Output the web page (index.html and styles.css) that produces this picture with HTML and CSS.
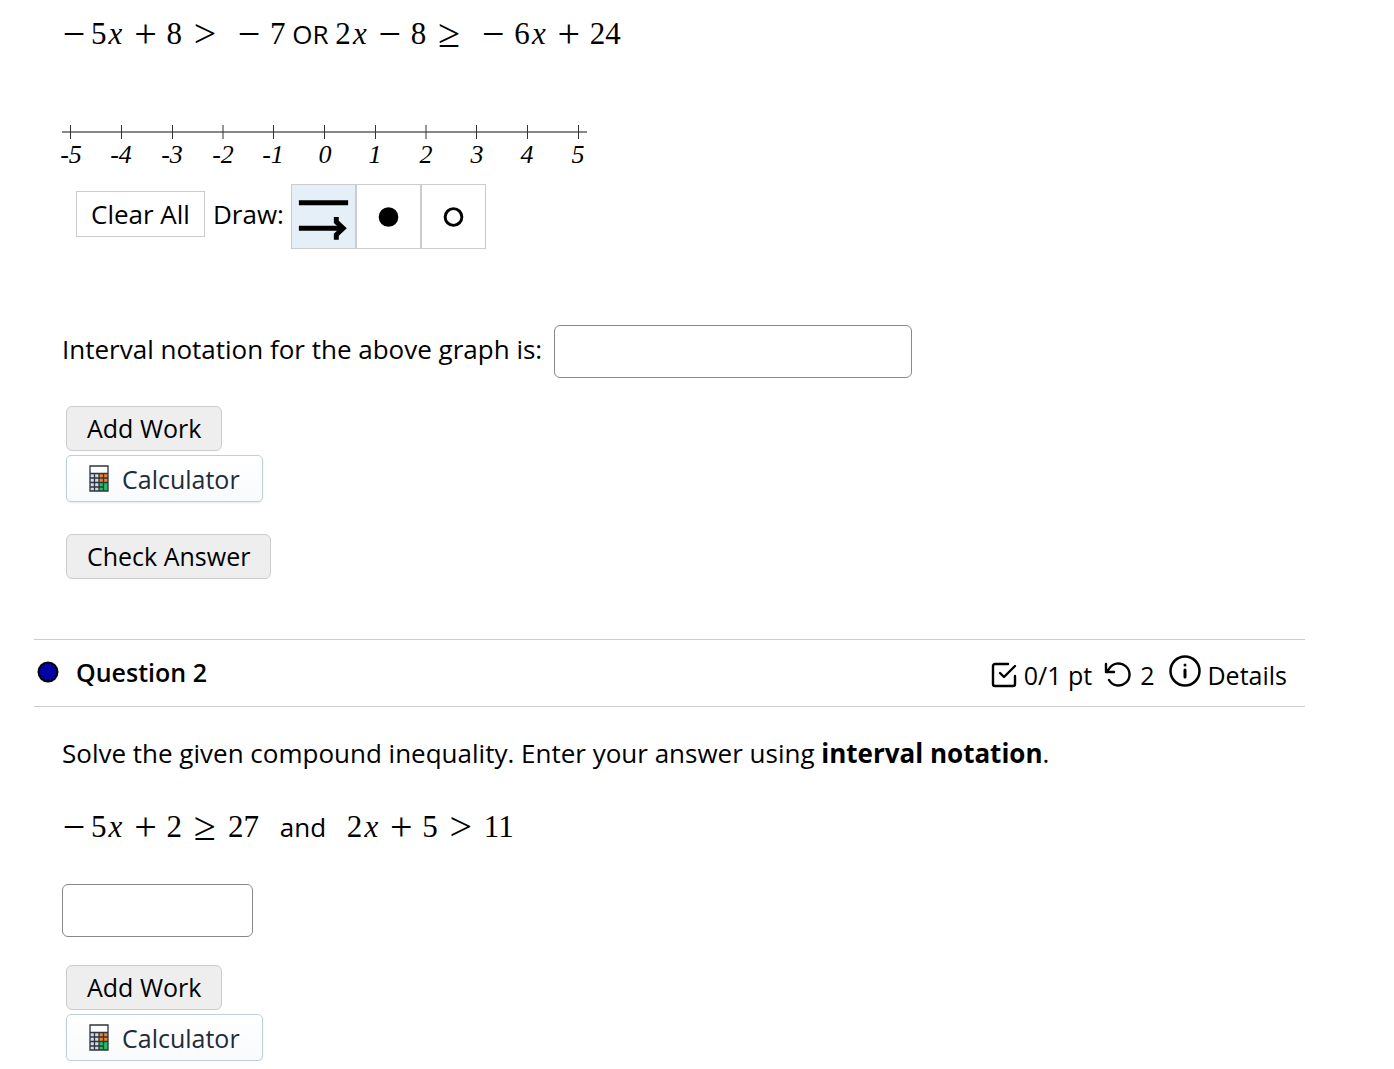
FILE: index.html
```html
<!DOCTYPE html>
<html lang="en">
<head>
    <meta charset="UTF-8">
    <meta name="viewport" content="width=device-width, initial-scale=1.0">
    <title>Compound Inequalities</title>
    <link rel="stylesheet" href="styles.css">
</head>
<body>
    <!-- calculator icon, shared by both questions -->
    <svg class="defs" aria-hidden="true">
        <symbol id="calc" viewBox="0 0 20 28">
            <path d="M1 1h18v25H1z" fill="#fff"/>
            <path d="M1 8h9v18H1z" fill="#d5d8dc"/>
            <path d="M10 8h9v9h-9z" fill="#f08229"/>
            <path d="M10 17h9v9h-9z" fill="#22c065"/>
            <path d="M1 1h18v25H1zM1 8.500h18M1 13h18M1 17.500h18M1 22h13M5.500 8v18M10 8v18M14.500 8v18" fill="none" stroke="#2b3440" stroke-width="1.300"/>
        </symbol>
    </svg>

    <main>
        <section class="question">
            <p class="math-line first-line">
                <span class="math"><span class="op neg">−</span>5<i>x</i><span class="op bin">+</span>8<span class="op rel">&gt;</span><span class="op bin">−</span>7</span>
                OR
                <span class="math">2<i>x</i><span class="op bin">−</span>8<span class="op rel">≥</span><span class="op bin">−</span>6<i>x</i><span class="op bin">+</span>24</span>
            </p>

            <svg class="number-line" width="560" height="56" viewBox="0 0 560 56">
                <path d="M10 17h525" stroke="#888" stroke-width="2"/>
                <path d="M18.500 10v14M69.500 10v14M120.500 10v14M171 10v14M221.500 10v14M272.500 10v14M323.500 10v14M374 10v14M424.500 10v14M475.500 10v14M526.500 10v14" stroke="#333" fill="none"/>
                <text x="19" y="48">-5</text>
                <text x="69" y="48">-4</text>
                <text x="120" y="48">-3</text>
                <text x="171" y="48">-2</text>
                <text x="221" y="48">-1</text>
                <text x="273" y="48">0</text>
                <text x="323" y="48">1</text>
                <text x="374" y="48">2</text>
                <text x="425" y="48">3</text>
                <text x="475" y="48">4</text>
                <text x="526" y="48">5</text>
            </svg>

            <div class="draw-tools">
                <button type="button" class="clear">Clear All</button>
                <span class="draw-label">Draw:</span>
                <div class="tools">
                    <button type="button" class="tool selected" aria-label="Line and arrow">
                        <svg width="64" height="64" viewBox="0 0 64 64" fill="none" stroke="#000" stroke-width="5">
                            <path d="M7 17.500h50M7 43.500h45"/>
                            <path d="M45 32v5l7 6.500-7 6.500v5"/>
                        </svg>
                    </button>
                    <button type="button" class="tool" aria-label="Closed dot">
                        <svg width="64" height="64" viewBox="0 0 64 64"><circle cx="32" cy="32" r="10"/></svg>
                    </button>
                    <button type="button" class="tool" aria-label="Open dot">
                        <svg width="64" height="64" viewBox="0 0 64 64"><circle cx="32" cy="32" r="8.500" fill="#fff" stroke="#000" stroke-width="3"/></svg>
                    </button>
                </div>
            </div>

            <div class="answer">
                <label for="interval1">Interval notation for the above graph is:</label>
                <input type="text" id="interval1" name="interval1" class="wide">
            </div>

            <div class="actions">
                <button type="button" class="btn">Add Work</button>
                <button type="button" class="btn calculator"><svg width="20" height="28"><use href="#calc"/></svg>Calculator</button>
            </div>
            <div class="actions check">
                <button type="submit" class="btn">Check Answer</button>
            </div>
        </section>

        <header class="question-header">
            <svg class="status" width="22" height="22" viewBox="0 0 22 22"><circle cx="11" cy="11" r="9.500" fill="#0000a5" stroke="#000" stroke-width="2"/></svg>
            <h2>Question 2</h2>
            <div class="info">
                <svg width="26" height="26" viewBox="0 0 26 26" fill="none" stroke="#000" stroke-width="2.400" stroke-linecap="round" stroke-linejoin="round">
                    <path d="M17 2H4a2 2 0 0 0-2 2v18a2 2 0 0 0 2 2h18a2 2 0 0 0 2-2v-8M9 11l4 4L24 4"/>
                </svg>
                <span class="points">0/1 pt</span>
                <svg width="28" height="26" viewBox="0 0 28 26" fill="none" stroke="#000" stroke-width="2.400" stroke-linecap="round" stroke-linejoin="round">
                    <path d="M2 2v8h8M2 10l3-3a11 11 0 1 1 0 11"/>
                </svg>
                <span class="tries">2</span>
                <button type="button" class="details">
                    <svg width="32" height="32" viewBox="0 0 32 32" fill="none" stroke="#000" stroke-width="3" stroke-linecap="round">
                        <circle cx="16" cy="16" r="14.500" stroke-width="2.500"/>
                        <path d="M16 15v7M16 10v0"/>
                    </svg>
                    Details
                </button>
            </div>
        </header>

        <section class="question">
            <p class="prompt" id="prompt2">Solve the given compound inequality. Enter your answer using <b>interval notation</b>.</p>
            <p class="math-line">
                <span class="math"><span class="op neg">−</span>5<i>x</i><span class="op bin">+</span>2<span class="op rel">≥</span>27</span>
                <span class="word">and</span>
                <span class="math">2<i>x</i><span class="op bin">+</span>5<span class="op rel">&gt;</span>11</span>
            </p>
            <div class="answer second">
                <input type="text" id="interval2" name="interval2" aria-labelledby="prompt2">
            </div>
            <div class="actions">
                <button type="button" class="btn">Add Work</button>
                <button type="button" class="btn calculator"><svg width="20" height="28"><use href="#calc"/></svg>Calculator</button>
            </div>
        </section>
    </main>
</body>
</html>
```

FILE: styles.css
```css
body {
    margin: 0;
    background-color: #fff;
    color: #000;
    font-family: "Open Sans", sans-serif;
    font-size: 26px;
    line-height: 36px;
}
main {
    margin: 0 89px 0 34px;
}
.defs {
    display: none;
}
.question {
    padding-left: 28px;
}
p {
    margin: 0;
}
button, input {
    box-sizing: border-box;
    font: inherit;
    color: inherit;
}
button {
    cursor: pointer;
}

/* formulas */
.math-line {
    height: 36px;
    white-space: nowrap;
}
.first-line {
    padding-top: 16px;
}
.math {
    font-family: "Liberation Serif", serif;
    font-size: 31px;
}
.math i {
    display: inline-block;
    width: 18px;
    text-align: center;
}
.op {
    display: inline-block;
    width: 24px;
    font-size: 40px;
    line-height: 30px;
    text-align: center;
    vertical-align: -3px;
}
.bin {
    margin: 0 9px;
}
.rel {
    margin: 0 11px;
}
.neg {
    margin-right: 5px;
}
.word {
    margin: 0 14px;
}

/* number line */
.number-line {
    display: block;
    margin: 63px 0 0 -10px;
}
.number-line text {
    font-family: "Liberation Serif", serif;
    font-size: 26px;
    font-style: italic;
    text-anchor: middle;
}
.draw-tools {
    display: flex;
    align-items: center;
    margin: 13px 0 0 14px;
}
.clear {
    height: 46px;
    margin: 0 0 6px;
    padding: 0 14px;
    border: 1px solid #ccc;
    background-color: #fff;
}
.draw-label {
    margin: 0 7px 6px 8px;
}
.tools {
    display: flex;
}
.tool {
    display: flex;
    width: 65px;
    height: 65px;
    padding: 0;
    border: 1px solid #ccc;
    background-color: #fff;
}
.selected {
    background-color: #e5eff8;
}

/* answers */
.answer {
    display: flex;
    align-items: center;
    gap: 12px;
    margin-top: 76px;
}
.answer label {
    margin-bottom: 6px;
}
.second {
    margin-top: 39px;
}
input {
    width: 191px;
    height: 53px;
    padding: 0 10px;
    border: 1px solid #888;
    border-radius: 6px;
}
.wide {
    width: 358px;
}
.actions {
    display: flex;
    flex-direction: column;
    align-items: flex-start;
    gap: 4px;
    margin: 28px 0 0 4px;
}
.check {
    margin-top: 32px;
}
.btn {
    height: 45px;
    padding: 0 20px 2px;
    border: 1px solid #ccc;
    border-radius: 6px;
    background-color: #eee;
    font-size: 25px;
}
.calculator {
    display: flex;
    align-items: center;
    gap: 13px;
    height: 47px;
    padding: 0 22px;
    border-color: #bfcfda;
    border-radius: 5px;
    background: linear-gradient(#fff, #f8fafc);
    box-shadow: 0 1px 2px #e3e8ec;
    color: #222b36;
}

/* question heading */
.question-header {
    display: flex;
    align-items: center;
    box-sizing: border-box;
    height: 68px;
    margin-top: 60px;
    padding-bottom: 2px;
    border-top: 1px solid #ccc;
    border-bottom: 1px solid #ccc;
}
.status {
    margin: 0 17px 0 3px;
}
h2 {
    margin: 0;
    font-size: 25px;
    font-weight: 600;
}
.info {
    display: flex;
    align-items: center;
    margin: 6px 18px 0 auto;
    font-size: 25px;
}
.points {
    margin: 0 12px 0 7px;
}
.tries {
    margin: 0 15px 0 8px;
}
.details {
    display: flex;
    align-items: center;
    gap: 6px;
    padding: 0;
    border: 0;
    background: none;
}
.details svg {
    margin-bottom: 8px;
}
.prompt {
    padding: 28px 0 38px;
}
```
